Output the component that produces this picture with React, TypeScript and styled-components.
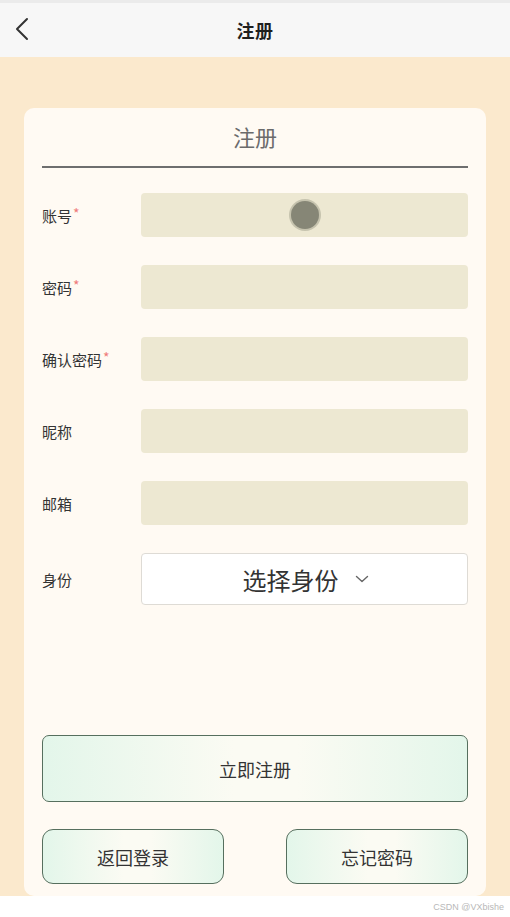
import styled, { createGlobalStyle } from "styled-components";

const GlobalStyle = createGlobalStyle`
  html, body {
    margin: 0;
    padding: 0;
    background: #ffffff;
    font-family: "Noto Sans CJK SC", "Noto Sans", sans-serif;
  }
  * {
    box-sizing: border-box;
  }
`;

const Screen = styled.div`
  width: 510px;
  min-height: 917px;
  display: flex;
  flex-direction: column;
`;

const NavBar = styled.header`
  height: 57px;
  border-top: 3px solid #ebebeb;
  background: #f7f7f7;
  display: flex;
  align-items: center;
  justify-content: center;
  position: relative;
`;

const BackButton = styled.button`
  position: absolute;
  left: 10px;
  top: 12px;
  width: 24px;
  height: 28px;
  padding: 0;
  border: none;
  background: transparent;
  display: flex;
  align-items: center;
  justify-content: center;
`;

const NavTitle = styled.h1`
  margin: 0;
  font-size: 18px;
  font-weight: 700;
  color: #1f1f1f;
  letter-spacing: 0.5px;
`;

const Page = styled.main`
  background: #fbe9cd;
  padding: 51px 24px 0;
`;

const Card = styled.section`
  background: #fffaf3;
  border-radius: 10px;
  padding: 0 18px 12px;
  display: flex;
  flex-direction: column;
`;

const CardTitle = styled.h2`
  margin: 0;
  height: 60px;
  padding-top: 13px;
  font-size: 22px;
  line-height: 30px;
  font-weight: 400;
  text-align: center;
  color: #6b6b6b;
  border-bottom: 2px solid #6e6e6e;
`;

const Form = styled.div`
  display: flex;
  flex-direction: column;
  gap: 28px;
  padding-top: 25px;
`;

const Row = styled.div`
  display: grid;
  grid-template-columns: 99px 1fr;
  align-items: center;
`;

const Label = styled.label`
  font-size: 15px;
  color: #333333;
  display: flex;
  align-items: center;
`;

const Star = styled.span`
  color: #ef7a7a;
  font-size: 14px;
  margin-left: 1px;
  position: relative;
  top: -2px;
`;

const Input = styled.div`
  height: 44px;
  border-radius: 4px;
  background: #ede8d2;
  display: flex;
  align-items: center;
  justify-content: center;
`;

const Dot = styled.span`
  width: 28px;
  height: 28px;
  border-radius: 50%;
  background: #868676;
  box-shadow: 0 0 0 2px rgba(150, 150, 130, 0.45);
`;

const Select = styled.div`
  height: 52px;
  border: 1px solid #dedbd5;
  border-radius: 4px;
  background: #ffffff;
  display: flex;
  align-items: center;
  justify-content: center;
  gap: 16px;
  padding-left: 2px;
  font-size: 24px;
  color: #333333;
`;

const Actions = styled.div`
  display: flex;
  flex-direction: column;
  gap: 27px;
  margin-top: 130px;
`;

const ActionRow = styled.div`
  display: flex;
  justify-content: space-between;
`;

const Button = styled.button<{ $wide?: boolean }>`
  width: ${(p) => (p.$wide ? "100%" : "182px")};
  height: ${(p) => (p.$wide ? "67px" : "55px")};
  border: 1.5px solid #566f5e;
  border-radius: ${(p) => (p.$wide ? "7px" : "11px")};
  background: linear-gradient(90deg, #e3f6ea 0%, #fbfbf3 45%, #fbfbf3 60%, #e3f6ea 100%);
  font-family: inherit;
  font-size: 18px;
  color: #333333;
  cursor: pointer;
`;

const Footer = styled.footer`
  height: 22px;
  display: flex;
  align-items: center;
  justify-content: flex-end;
  padding-right: 6px;
  font-family: "Liberation Sans", Arial, sans-serif;
  font-size: 9px;
  color: #b8b8b8;
`;

type Field = { label: string; required?: boolean; dot?: boolean };

const fields: Field[] = [
  { label: "账号", required: true, dot: true },
  { label: "密码", required: true },
  { label: "确认密码", required: true },
  { label: "昵称" },
  { label: "邮箱" },
];

export default function App() {
  return (
    <Screen>
      <GlobalStyle />
      <NavBar>
        <BackButton aria-label="back">
          <svg width="16" height="24" viewBox="0 0 16 24" fill="none">
            <path d="M13 2 L3 12 L13 22" stroke="#333" strokeWidth="2" strokeLinecap="round" strokeLinejoin="round" />
          </svg>
        </BackButton>
        <NavTitle>注册</NavTitle>
      </NavBar>
      <Page>
        <Card>
          <CardTitle>注册</CardTitle>
          <Form>
            {fields.map((f) => (
              <Row key={f.label}>
                <Label>
                  {f.label}
                  {f.required && <Star>*</Star>}
                </Label>
                <Input>{f.dot && <Dot />}</Input>
              </Row>
            ))}
            <Row>
              <Label>身份</Label>
              <Select>
                选择身份
                <svg width="14" height="10" viewBox="0 0 14 10" fill="none">
                  <path d="M1.5 2.5 L7 7.5 L12.5 2.5" stroke="#666" strokeWidth="1.4" strokeLinecap="round" strokeLinejoin="round" />
                </svg>
              </Select>
            </Row>
          </Form>
          <Actions>
            <Button $wide>立即注册</Button>
            <ActionRow>
              <Button>返回登录</Button>
              <Button>忘记密码</Button>
            </ActionRow>
          </Actions>
        </Card>
      </Page>
      <Footer>CSDN @VXbishe</Footer>
    </Screen>
  );
}
